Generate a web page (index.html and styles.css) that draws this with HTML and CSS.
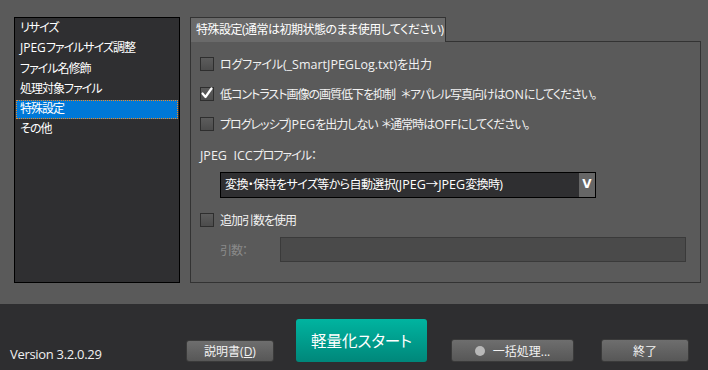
FILE: index.html
```html
<!DOCTYPE html>
<html lang="ja">
<head>
<meta charset="utf-8">
<link rel="stylesheet" href="styles.css">
</head>
<body>
<div class="main">
  <ul class="nav">
    <li>リサイズ</li>
    <li><span class="en">JPEG</span>ファイルサイズ調整</li>
    <li>ファイル名修飾</li>
    <li>処理対象ファイル</li>
    <li class="sel">特殊設定</li>
    <li>その他</li>
  </ul>
  <div class="panel">
    <div class="tabs">
      <div class="tab">特殊設定(通常は初期状態のまま使用してください)</div>
      <div class="tabfill"></div>
    </div>
    <div class="body">
      <label class="chk r1"><span class="box"></span><span>ログファイル<span class="en">(_SmartJPEGLog.txt)</span>を出力</span></label>
      <label class="chk r2"><span class="box"><svg width="14" height="14" viewBox="0 0 14 14"><path d="M2.5 7.5 L5.5 11 L11.5 2.5" fill="none" stroke="#fff" stroke-width="2.2" stroke-linecap="round" stroke-linejoin="round"/></svg></span><span>低コントラスト画像の画質低下を抑制<span class="sp"></span>＊アパレル写真向けは<span class="en">ON</span>にしてください。</span></label>
      <label class="chk r2"><span class="box"></span><span>プログレッシブ<span class="en">JPEG</span>を出力しない<span class="sp2"></span>＊通常時は<span class="en">OFF</span>にしてください。</span></label>
      <div class="icc"><span class="en">JPEG&nbsp;&nbsp;ICC</span>プロファイル：</div>
      <div class="select">
        <span class="selval">変換・保持をサイズ等から自動選択<span class="en">(JPEG→JPEG</span>変換時<span class="en">)</span></span>
        <span class="arrow">V</span>
      </div>
      <label class="chk r4"><span class="box"></span><span>追加引数を使用</span></label>
      <div class="args">
        <span class="argl">引数：</span>
        <span class="input"></span>
      </div>
    </div>
  </div>
</div>
<div class="footer">
  <div class="ver">Version 3.2.0.29</div>
  <button class="btn help">説明書(<u>D</u>)</button>
  <button class="btn start">軽量化スタート</button>
  <button class="btn batch"><span class="dot"></span>一括処理...</button>
  <button class="btn quit">終了</button>
</div>
</body>
</html>
```
FILE: styles.css
```css
* { box-sizing: border-box; }
html, body { margin: 0; padding: 0; }
body {
  width: 708px;
  height: 370px;
  background: #5a5a5a;
  font-family: "Open Sans", "Noto Sans CJK JP", sans-serif;
  font-feature-settings: "palt";
  font-size: 12px;
  letter-spacing: -1px;
  color: #f0f0f0;
  display: flex;
  flex-direction: column;
  overflow: hidden;
}
.en { letter-spacing: 0; font-size: 12.5px; }
.sp { display: inline-block; width: 6px; }
.sp2 { display: inline-block; width: 4px; }
.main {
  height: 304px;
  display: flex;
  padding: 17px 7px 0 14px;
  gap: 10px;
}
.nav {
  list-style: none;
  margin: 0;
  padding: 0 1px;
  width: 166px;
  height: 266px;
  background: #2f2f31;
  border: 1px solid #000;
  flex: none;
}
.nav li {
  height: 20.3px;
  line-height: 20px;
  padding-left: 4px;
  color: #fff;
  white-space: nowrap;
}
.nav li .en { font-size: 12px; }
.nav li.sel {
  background: #0078d7;
  outline: 1px dotted #f08a24;
  outline-offset: -1px;
  height: 19px;
  line-height: 18px;
  margin-top: 1px;
}
.panel {
  width: 511px;
  height: 266px;
  display: flex;
  flex-direction: column;
  flex: none;
}
.tabs { display: flex; height: 25px; }
.tab {
  flex: none;
  background: #6a6a6a;
  border: 1px solid #333;
  border-bottom: none;
  width: 256px;
  padding: 0 5px;
  line-height: 23px;
  letter-spacing: -0.5px;
  color: #fff;
  white-space: nowrap;
  overflow: hidden;
}
.tabfill { flex: 1; border-bottom: 1px solid #333; }
.body {
  flex: 1;
  border: 1px solid #333;
  border-top: none;
  padding: 14px 9px 0 9px;
  display: flex;
  flex-direction: column;
  align-items: flex-start;
}
.chk {
  display: flex;
  align-items: center;
  height: 14px;
  gap: 6px;
  white-space: nowrap;
  color: #f2f2f2;
}
.chk.r1 { margin-top: 1px; letter-spacing: -0.2px; }
.chk.r1 .en { letter-spacing: 0; }
.chk.r2 { margin-top: 16px; }
.chk.r4 { margin-top: 15px; }
.box {
  width: 14px;
  height: 14px;
  flex: none;
  border: 1px solid #2e2e2e;
  background: linear-gradient(#5c5c5c, #4c4c4c);
  display: block;
  position: relative;
}
.box svg { position: absolute; left: -1px; top: -2px; }
.icc {
  margin-top: 17px;
  line-height: 16px;
}
.select {
  margin-top: 8px;
  margin-left: 20px;
  width: 376px;
  height: 26px;
  border: 1px solid #000;
  background: #2f2f31;
  display: flex;
  align-items: stretch;
}
.selval {
  flex: 1;
  padding-left: 4px;
  line-height: 24px;
  color: #fff;
  white-space: nowrap;
  letter-spacing: -0.6px;
}
.arrow {
  width: 16px;
  background: #666;
  color: #fff;
  font-weight: bold;
  font-size: 12px;
  letter-spacing: 0;
  text-align: center;
  line-height: 22px;
  font-family: "DejaVu Sans", sans-serif;
}
.args {
  margin-top: 10px;
  margin-left: 20px;
  display: flex;
  align-items: center;
}
.argl { width: 60px; color: #8a8a8a; }
.input {
  width: 406px;
  height: 25px;
  background: #4a4a4a;
  border: 1px solid #3a3a3a;
}
.footer {
  flex: 1;
  background: #2e2e30;
  display: flex;
  align-items: flex-end;
  padding: 0 0 8px 10px;
}
.ver {
  width: 176px;
  font-size: 13px;
  line-height: 16px;
  color: #f0f0f0;
  letter-spacing: -0.3px;
}
.btn {
  font-family: "Open Sans", "Noto Sans CJK JP", sans-serif;
  font-feature-settings: "palt";
  font-size: 12px;
  letter-spacing: 0;
  color: #f2f2f2;
  border: 1px solid #3a3a3a;
  border-radius: 3px;
  background: linear-gradient(#6e6e6e, #575757);
  padding: 0;
  display: flex;
  align-items: center;
  justify-content: center;
  height: 23px;
}
.help { width: 88px; height: 22px; }
.start {
  margin-left: 22px;
  width: 131px;
  height: 43px;
  border: none;
  background: linear-gradient(#00b4a0, #00877a);
  font-size: 15.5px;
  color: #fff;
}
.batch { margin-left: 24px; width: 123px; }
.dot {
  width: 10px;
  height: 10px;
  border-radius: 50%;
  background: #b8b8b8;
  margin-right: 8px;
}
.quit { margin-left: 27px; width: 88px; }
```
